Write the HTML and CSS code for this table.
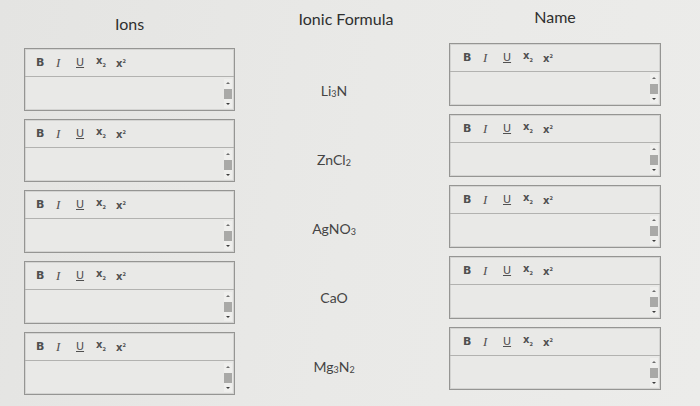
FILE: index.html
```html
<!DOCTYPE html>
<html lang="en">
<head>
<meta charset="utf-8">
<title>Ions</title>
<link rel="stylesheet" href="styles.css">
</head>
<body>
<main class="sheet">
  <section class="col col-ions">
    <h2 class="head">Ions</h2>
    <div class="boxes">
      <div class="editor"><div class="toolbar"><span class="tb b">B</span><span class="tb i">I</span><span class="tb u">U</span><span class="tb x">x<sub>2</sub></span><span class="tb x">x<sup>2</sup></span></div><div class="area"><div class="scroll"><span class="up"></span><span class="thumb"></span><span class="down"></span></div></div></div>
      <div class="editor"><div class="toolbar"><span class="tb b">B</span><span class="tb i">I</span><span class="tb u">U</span><span class="tb x">x<sub>2</sub></span><span class="tb x">x<sup>2</sup></span></div><div class="area"><div class="scroll"><span class="up"></span><span class="thumb"></span><span class="down"></span></div></div></div>
      <div class="editor"><div class="toolbar"><span class="tb b">B</span><span class="tb i">I</span><span class="tb u">U</span><span class="tb x">x<sub>2</sub></span><span class="tb x">x<sup>2</sup></span></div><div class="area"><div class="scroll"><span class="up"></span><span class="thumb"></span><span class="down"></span></div></div></div>
      <div class="editor"><div class="toolbar"><span class="tb b">B</span><span class="tb i">I</span><span class="tb u">U</span><span class="tb x">x<sub>2</sub></span><span class="tb x">x<sup>2</sup></span></div><div class="area"><div class="scroll"><span class="up"></span><span class="thumb"></span><span class="down"></span></div></div></div>
      <div class="editor"><div class="toolbar"><span class="tb b">B</span><span class="tb i">I</span><span class="tb u">U</span><span class="tb x">x<sub>2</sub></span><span class="tb x">x<sup>2</sup></span></div><div class="area"><div class="scroll"><span class="up"></span><span class="thumb"></span><span class="down"></span></div></div></div>
    </div>
  </section>
  <section class="col col-formula">
    <h2 class="head">Ionic Formula</h2>
    <ul class="formulas">
      <li>Li<sub>3</sub>N</li>
      <li>ZnCl<sub>2</sub></li>
      <li>AgNO<sub>3</sub></li>
      <li>CaO</li>
      <li>Mg<sub>3</sub>N<sub>2</sub></li>
    </ul>
  </section>
  <section class="col col-name">
    <h2 class="head">Name</h2>
    <div class="boxes">
      <div class="editor"><div class="toolbar"><span class="tb b">B</span><span class="tb i">I</span><span class="tb u">U</span><span class="tb x">x<sub>2</sub></span><span class="tb x">x<sup>2</sup></span></div><div class="area"><div class="scroll"><span class="up"></span><span class="thumb"></span><span class="down"></span></div></div></div>
      <div class="editor"><div class="toolbar"><span class="tb b">B</span><span class="tb i">I</span><span class="tb u">U</span><span class="tb x">x<sub>2</sub></span><span class="tb x">x<sup>2</sup></span></div><div class="area"><div class="scroll"><span class="up"></span><span class="thumb"></span><span class="down"></span></div></div></div>
      <div class="editor"><div class="toolbar"><span class="tb b">B</span><span class="tb i">I</span><span class="tb u">U</span><span class="tb x">x<sub>2</sub></span><span class="tb x">x<sup>2</sup></span></div><div class="area"><div class="scroll"><span class="up"></span><span class="thumb"></span><span class="down"></span></div></div></div>
      <div class="editor"><div class="toolbar"><span class="tb b">B</span><span class="tb i">I</span><span class="tb u">U</span><span class="tb x">x<sub>2</sub></span><span class="tb x">x<sup>2</sup></span></div><div class="area"><div class="scroll"><span class="up"></span><span class="thumb"></span><span class="down"></span></div></div></div>
      <div class="editor"><div class="toolbar"><span class="tb b">B</span><span class="tb i">I</span><span class="tb u">U</span><span class="tb x">x<sub>2</sub></span><span class="tb x">x<sup>2</sup></span></div><div class="area"><div class="scroll"><span class="up"></span><span class="thumb"></span><span class="down"></span></div></div></div>
    </div>
  </section>
</main>
</body>
</html>
```
FILE: styles.css
```css
html, body {
  margin: 0;
  padding: 0;
}
body {
  width: 700px;
  height: 406px;
  overflow: hidden;
  background: linear-gradient(100deg, #e4e4e2 0%, #e9e9e7 50%, #ececea 100%);
  font-family: Lato, "Open Sans", sans-serif;
  color: #333;
}
.sheet {
  display: grid;
  grid-template-columns: 211px 214px 212px;
  padding-left: 24px;
}
.col {
  display: flex;
  flex-direction: column;
}
.head {
  margin: 0;
  font-size: 16px;
  font-weight: 400;
  line-height: 19px;
  text-align: center;
  color: #2f2f2f;
}
.col-ions .head { padding-top: 14px; margin-bottom: 15px; }
.col-formula .head { padding-top: 9px; padding-left: 8px; }
.col-name .head { padding-top: 7px; margin-bottom: 17px; }

.boxes {
  display: flex;
  flex-direction: column;
  gap: 8px;
}
.editor {
  height: 63px;
  box-sizing: border-box;
  border: 1px solid #959593;
  box-shadow: inset 0 0 0 1px rgba(150,150,148,0.25);
  display: flex;
  flex-direction: column;
  background: #e9e9e7;
}
.toolbar {
  height: 28px;
  box-sizing: border-box;
  border-bottom: 1px solid #b2b2b0;
  display: flex;
  align-items: center;
  padding-left: 11px;
  color: #505050;
  font-family: "DejaVu Sans", sans-serif;
  font-size: 11px;
}
.col-name .toolbar { padding-left: 13px; }
.tb {
  width: 20px;
  line-height: 14px;
}
.tb.b { font-weight: bold; }
.tb.i {
  font-family: "Liberation Serif", serif;
  font-style: italic;
  font-size: 13px;
}
.tb.u { text-decoration: underline; text-underline-offset: 1px; }
.tb.x { font-size: 10px; font-weight: bold; }
.tb sub, .tb sup { font-size: 5px; }
.area {
  flex: 1;
  display: flex;
  justify-content: flex-end;
  padding: 2px 2px 2px 0;
}
.scroll {
  width: 8px;
  display: flex;
  flex-direction: column;
  align-items: center;
  justify-content: space-between;
  background: #efefed;
  padding: 3px 0;
  box-sizing: border-box;
}
.up, .down {
  width: 0;
  height: 0;
  border-left: 2.5px solid transparent;
  border-right: 2.5px solid transparent;
}
.up { border-bottom: 2.5px solid #6c6c6c; }
.down { border-top: 2.5px solid #3c3c3c; }
.thumb {
  width: 8px;
  height: 10px;
  background: #a9a9a7;
}
.formulas {
  list-style: none;
  margin: 28px 0 0 0;
  padding: 0 16px 0 0;
  display: flex;
  flex-direction: column;
}
.formulas li {
  height: 69px;
  display: flex;
  align-items: center;
  justify-content: center;
  font-size: 14px;
  color: #444;
}
.formulas sub {
  font-size: 9px;
  position: relative;
  top: 3px;
}
```
